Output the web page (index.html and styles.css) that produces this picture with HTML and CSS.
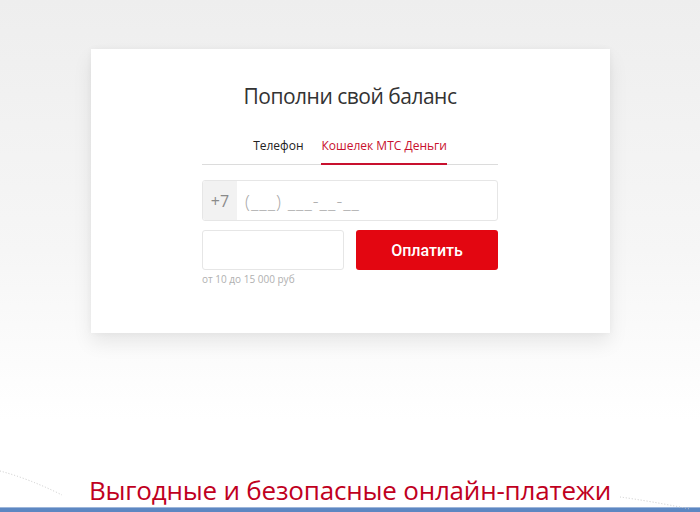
FILE: index.html
```html
<!DOCTYPE html>
<html lang="ru">
<head>
<meta charset="utf-8">
<title>Пополни свой баланс</title>
<link rel="stylesheet" href="styles.css">
</head>
<body>
<div class="page">
  <section class="card">
    <h2 class="card-title">Пополни свой баланс</h2>
    <nav class="tabs">
      <span class="tab">Телефон</span>
      <span class="tab tab-active">Кошелек МТС Деньги</span>
    </nav>
    <div class="form">
      <div class="phone">
        <span class="phone-prefix">+7</span>
        <span class="phone-mask">(___) ___-__-__</span>
      </div>
      <div class="pay-row">
        <div class="amount"></div>
        <button class="pay-btn">Оплатить</button>
      </div>
      <div class="hint">от 10 до 15 000 руб</div>
    </div>
  </section>
  <div class="promo">
    <svg class="deco deco-left" width="90" height="40" viewBox="0 0 90 40"><path d="M0 4 Q30 12 62 28" fill="none" stroke="#c9c9c9" stroke-width="1" stroke-dasharray="1 2"/></svg>
    <svg class="deco deco-right" width="80" height="40" viewBox="0 0 80 40"><path d="M0 24 Q30 28 70 36" fill="none" stroke="#c9c9c9" stroke-width="1" stroke-dasharray="1 2"/></svg>
    <h1 class="promo-title">Выгодные и безопасные онлайн-платежи</h1>
  </div>
  <div class="bottom-bar"></div>
</div>
</body>
</html>
```

FILE: styles.css
```css
* { box-sizing: border-box; }
html, body { margin: 0; padding: 0; }
body {
  font-family: "Open Sans", "Noto Sans", sans-serif;
  background: #fff;
  width: 700px;
  height: 512px;
  overflow: hidden;
}
.page {
  height: 512px;
  display: flex;
  flex-direction: column;
  align-items: center;
  padding-top: 49px;
  background: linear-gradient(#eeeeee 0px, #f6f6f6 250px, #ffffff 420px);
}
.card {
  width: 519px;
  height: 284px;
  background: #fff;
  box-shadow: 0 10px 18px rgba(0,0,0,0.08), 0 0 6px rgba(0,0,0,0.04);
  display: flex;
  flex-direction: column;
  align-items: center;
  padding-top: 32px;
}
.card-title {
  margin: 0;
  font-size: 21px;
  font-weight: 400;
  color: #333;
  line-height: 30px;
  letter-spacing: -0.5px;
}
.tabs {
  margin-top: 23px;
  width: 296px;
  display: flex;
  justify-content: center;
  gap: 18px;
  border-bottom: 1px solid #dcdcdc;
}
.tab {
  font-size: 12px;
  color: #222;
  line-height: 16px;
  padding: 4px 0 9px;
}
.tab-active {
  color: #c8102e;
  border-bottom: 2px solid #c8102e;
  margin-bottom: -1px;
}
.form {
  width: 296px;
  margin-top: 15px;
  display: flex;
  flex-direction: column;
}
.phone {
  height: 41px;
  border: 1px solid #e6e6e6;
  border-radius: 3px;
  display: flex;
  align-items: center;
  overflow: hidden;
}
.phone-prefix {
  width: 34px;
  height: 100%;
  background: #f2f2f2;
  color: #8a8a8a;
  font-size: 16px;
  display: flex;
  align-items: center;
  justify-content: center;
}
.phone-mask {
  margin-left: 8px;
  color: #a8a8a8;
  font-size: 18px;
  font-weight: 300;
  letter-spacing: 1px;
}
.pay-row {
  margin-top: 9px;
  display: flex;
  justify-content: space-between;
}
.amount {
  width: 142px;
  height: 40px;
  border: 1px solid #e6e6e6;
  border-radius: 3px;
}
.pay-btn {
  width: 142px;
  height: 40px;
  border: 0;
  border-radius: 3px;
  background: #e30611;
  color: #fff;
  font-family: "Roboto", "Open Sans", sans-serif;
  font-size: 16px;
  font-weight: 500;
  padding: 0;
}
.hint {
  margin-top: 2px;
  font-size: 10px;
  color: #b0b0b0;
}
.promo {
  margin-top: auto;
  width: 100%;
  position: relative;
  display: flex;
  justify-content: center;
}
.promo-title {
  margin: 0;
  font-size: 26px;
  font-weight: 400;
  color: #c0001e;
  line-height: 34px;
  letter-spacing: -0.2px;
}
.deco { position: absolute; }
.deco-left { left: 0; top: -6px; }
.deco-right { right: 0; top: 0; }
.bottom-bar {
  width: 100%;
  height: 5px;
  background: #5d87c2;
  border-top: 1px solid #9db6da;
}
```
